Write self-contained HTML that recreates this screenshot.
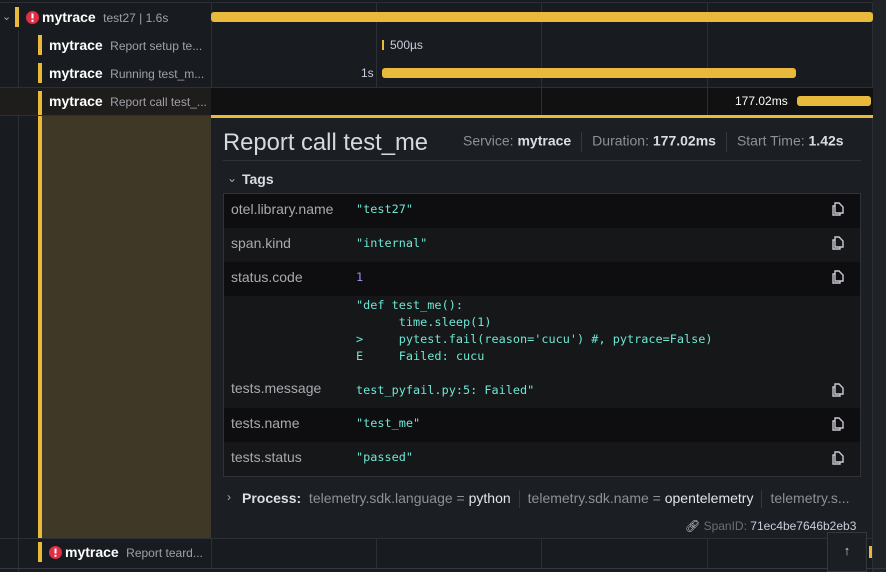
<!DOCTYPE html>
<html><head><meta charset="utf-8"><style>
*{margin:0;padding:0;box-sizing:border-box}
body{width:886px;height:572px;background:#181b1f;font-family:"Liberation Sans",sans-serif;color:#ccccdc;position:relative;overflow:hidden}
.a{position:absolute}
.vl{position:absolute;width:1px;background:#2c2f35}
.bar{position:absolute;background:#e9b93b;border-radius:3px;height:9px}
.svc{font-weight:bold;color:#fff;font-size:14px}
.op{color:#9fa1a8;font-size:12px}
.ybar{position:absolute;width:4px;background:#e9b93b}
.mono{font-family:"DejaVu Sans Mono","Liberation Mono",monospace;font-size:11.85px;color:#6ee7d6}
.key{position:absolute;left:7px;font-size:14px;color:#a8aab0}
.tr{position:absolute;left:0;width:636px}
</style></head><body>
<div class="a" style="left:0;top:2px;width:873px;height:1px;background:#2c2f35"></div>
<div class="vl" style="left:211px;top:3px;height:112px"></div>
<div class="vl" style="left:376px;top:3px;height:84px"></div>
<div class="vl" style="left:541px;top:3px;height:112px"></div>
<div class="vl" style="left:707px;top:3px;height:84px"></div>
<div class="vl" style="left:872px;top:3px;height:569px"></div>
<div class="a" style="left:873px;top:0;width:13px;height:572px;background:#1f2227"></div>
<div class="a" style="left:2px;top:10px;color:#aaa;font-size:11px">&#8964;</div>
<div class="ybar" style="left:15px;top:7px;height:20px"></div>
<svg class="a" style="left:26px;top:11px" width="13" height="13"><circle cx="6.5" cy="6.5" r="6.5" fill="#e02f44"/><rect x="5.5" y="2.5" width="2" height="5" fill="#fff"/><rect x="5.5" y="8.8" width="2" height="2" fill="#fff"/></svg>
<div class="a" style="left:42px;top:9px"><span class="svc">mytrace</span> <span class="op" style="margin-left:3px">test27 | 1.6s</span></div>
<div class="bar" style="left:211px;top:12px;width:662px;height:10px"></div>
<div class="vl" style="left:18px;top:31px;height:541px"></div>
<div class="ybar" style="left:38px;top:35px;height:20px"></div>
<div class="a" style="left:49px;top:37px;white-space:nowrap"><span class="svc">mytrace</span> <span class="op" style="margin-left:3px">Report setup te...</span></div>
<div class="a" style="left:382px;top:40px;width:2px;height:10px;background:#e9b93b"></div>
<div class="a" style="left:390px;top:38px;font-size:12px;color:#ccccdc">500µs</div>
<div class="ybar" style="left:38px;top:63px;height:20px"></div>
<div class="a" style="left:49px;top:65px;white-space:nowrap"><span class="svc">mytrace</span> <span class="op" style="margin-left:3px">Running test_m...</span></div>
<div class="a" style="left:361px;top:66px;font-size:12px">1s</div>
<div class="bar" style="left:382px;top:68px;width:414px;height:10px"></div>
<div class="a" style="left:0;top:87px;width:211px;height:28px;background:#1e1d1b"></div>
<div class="a" style="left:211px;top:87px;width:662px;height:28px;background:#111112"></div>
<div class="a" style="left:0;top:87px;width:873px;height:1px;background:#2c2f35"></div>
<div class="vl" style="left:541px;top:87px;height:28px"></div>
<div class="vl" style="left:707px;top:87px;height:28px"></div>
<div class="ybar" style="left:38px;top:91px;height:447px"></div>
<div class="a" style="left:49px;top:93px;white-space:nowrap"><span class="svc">mytrace</span> <span class="op" style="margin-left:3px">Report call test_...</span></div>
<div class="a" style="left:735px;top:94px;font-size:12px;color:#fff">177.02ms</div>
<div class="bar" style="left:797px;top:96px;width:74px;height:10px"></div>
<div class="a" style="left:0;top:115px;width:873px;height:1px;background:#2c2f35"></div>
<div class="a" style="left:42px;top:116px;width:169px;height:422px;background:#3f3826"></div>
<div class="a" style="left:211px;top:115px;width:662px;height:3px;background:#e9b93b"></div>
<div class="a" style="left:211px;top:118px;width:661px;height:420px;background:#1b1e23"></div>
<div class="a" style="left:223px;top:129px;font-size:23.8px;color:#d8d9e0">Report call test_me</div>
<div class="a" style="left:463px;top:132px;font-size:14px;color:#8e9097;white-space:nowrap">Service: <b style="color:#dcdde4">mytrace</b><span style="display:inline-block;width:1px;height:20px;background:#34373c;margin:0 10px;vertical-align:middle"></span>Duration: <b style="color:#dcdde4">177.02ms</b><span style="display:inline-block;width:1px;height:20px;background:#34373c;margin:0 10px;vertical-align:middle"></span>Start Time: <b style="color:#dcdde4">1.42s</b></div>
<div class="a" style="left:223px;top:160px;width:638px;height:1px;background:#2f3237"></div>
<div class="a" style="left:227px;top:171px;font-size:12px;color:#aaa">&#8964;</div>
<div class="a" style="left:242px;top:171px;font-size:14px;font-weight:bold;color:#dcdde4">Tags</div>
<div class="a" style="left:223px;top:193px;width:638px;height:284px;border:1px solid #2f3237;background:#0e0e10">
 <div class="tr" style="top:0;height:34px;background:#0e0e10"><div class="key" style="top:7px">otel.library.name</div><div class="a mono" style="left:132px;top:8px">"test27"</div></div>
 <div class="tr" style="top:34px;height:34px;background:#161719"><div class="key" style="top:7px">span.kind</div><div class="a mono" style="left:132px;top:8px">"internal"</div></div>
 <div class="tr" style="top:68px;height:34px;background:#0e0e10"><div class="key" style="top:7px">status.code</div><div class="a mono" style="left:132px;top:8px;color:#9b8cf0">1</div></div>
 <div class="tr" style="top:102px;height:112px;background:#161719"><div class="key" style="top:84px">tests.message</div><pre class="a mono" style="left:132px;top:1px;line-height:17px">"def test_me():
      time.sleep(1)
&gt;     pytest.fail(reason='cucu') #, pytrace=False)
E     Failed: cucu

test_pyfail.py:5: Failed"</pre></div>
 <div class="tr" style="top:214px;height:34px;background:#0e0e10"><div class="key" style="top:7px">tests.name</div><div class="a mono" style="left:132px;top:8px">"test_me"</div></div>
 <div class="tr" style="top:248px;height:34px;background:#161719"><div class="key" style="top:7px">tests.status</div><div class="a mono" style="left:132px;top:8px">"passed"</div></div>
</div>
<svg class="a" style="left:831px;top:202px" width="14" height="14" fill="none" stroke="#c8c9d0" stroke-width="1.4"><path d="M4 1h4l4 4v6H4z"/><path d="M4 4H2v9h7v-2"/></svg>
<svg class="a" style="left:831px;top:236px" width="14" height="14" fill="none" stroke="#c8c9d0" stroke-width="1.4"><path d="M4 1h4l4 4v6H4z"/><path d="M4 4H2v9h7v-2"/></svg>
<svg class="a" style="left:831px;top:270px" width="14" height="14" fill="none" stroke="#c8c9d0" stroke-width="1.4"><path d="M4 1h4l4 4v6H4z"/><path d="M4 4H2v9h7v-2"/></svg>
<svg class="a" style="left:831px;top:383px" width="14" height="14" fill="none" stroke="#c8c9d0" stroke-width="1.4"><path d="M4 1h4l4 4v6H4z"/><path d="M4 4H2v9h7v-2"/></svg>
<svg class="a" style="left:831px;top:417px" width="14" height="14" fill="none" stroke="#c8c9d0" stroke-width="1.4"><path d="M4 1h4l4 4v6H4z"/><path d="M4 4H2v9h7v-2"/></svg>
<svg class="a" style="left:831px;top:451px" width="14" height="14" fill="none" stroke="#c8c9d0" stroke-width="1.4"><path d="M4 1h4l4 4v6H4z"/><path d="M4 4H2v9h7v-2"/></svg>
<div class="a" style="left:227px;top:490px;font-size:12px;color:#aaa">&#8250;</div>
<div class="a" style="left:242px;top:490px;font-size:14px;white-space:nowrap;color:#8e9097;width:615px;overflow:hidden"><b style="color:#dcdde4">Process:</b>&nbsp; telemetry.sdk.language = <span style="color:#e4e5ea">python</span><span style="display:inline-block;width:1px;height:18px;background:#34373c;margin:0 8px;vertical-align:middle"></span>telemetry.sdk.name = <span style="color:#e4e5ea">opentelemetry</span><span style="display:inline-block;width:1px;height:18px;background:#34373c;margin:0 8px;vertical-align:middle"></span>telemetry.s...</div>
<div class="a" style="left:685px;top:519px;font-size:12px;color:#6c6e75;white-space:nowrap"><span style="color:#c8c9d0">&#x1F517;&#xFE0E;</span> SpanID: <span style="color:#ccccdc">71ec4be7646b2eb3</span></div>
<div class="a" style="left:0;top:538px;width:873px;height:1px;background:#2c2f35"></div>
<div class="vl" style="left:211px;top:539px;height:29px"></div>
<div class="vl" style="left:376px;top:539px;height:29px"></div>
<div class="vl" style="left:541px;top:539px;height:29px"></div>
<div class="vl" style="left:707px;top:539px;height:29px"></div>
<div class="ybar" style="left:38px;top:542px;height:20px"></div>
<svg class="a" style="left:49px;top:546px" width="13" height="13"><circle cx="6.5" cy="6.5" r="6.5" fill="#e02f44"/><rect x="5.5" y="2.5" width="2" height="5" fill="#fff"/><rect x="5.5" y="8.8" width="2" height="2" fill="#fff"/></svg>
<div class="a" style="left:65px;top:544px;white-space:nowrap"><span class="svc">mytrace</span> <span class="op" style="margin-left:3px">Report teard...</span></div>
<div class="a" style="left:869px;top:546px;width:3px;height:12px;background:#e9b93b"></div>
<div class="a" style="left:0;top:568px;width:886px;height:1px;background:#34373c"></div>
<div class="a" style="left:827px;top:532px;width:40px;height:40px;background:#1b1e23;border:1px solid #34373c;color:#ccc;font-size:13px;text-align:center;line-height:36px">&#8593;</div>
</body></html>
